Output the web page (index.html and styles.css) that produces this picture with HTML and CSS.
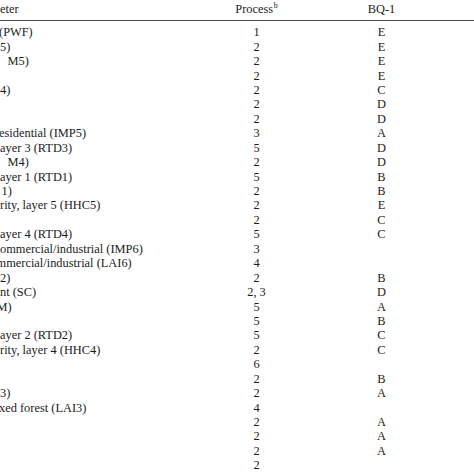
FILE: index.html
```html
<!DOCTYPE html>
<html>
<head>
<meta charset="utf-8">
<link rel="stylesheet" href="styles.css">
</head>
<body>
<div class="table">
  <div class="row head">
    <div class="c1">eter</div>
    <div class="c2">Process<sup>b</sup></div>
    <div class="c3">BQ-1</div>
  </div>
  <div class="body">
    <div class="row"><div class="c1 cut1">(PWF)</div><div class="c2">1</div><div class="c3">E</div></div>
    <div class="row"><div class="c1">5)</div><div class="c2">2</div><div class="c3">E</div></div>
    <div class="row"><div class="c1 ind">M5)</div><div class="c2">2</div><div class="c3">E</div></div>
    <div class="row"><div class="c1"></div><div class="c2">2</div><div class="c3">E</div></div>
    <div class="row"><div class="c1">4)</div><div class="c2">2</div><div class="c3">C</div></div>
    <div class="row"><div class="c1"></div><div class="c2">2</div><div class="c3">D</div></div>
    <div class="row"><div class="c1"></div><div class="c2">2</div><div class="c3">D</div></div>
    <div class="row"><div class="c1 cut1">esidential (IMP5)</div><div class="c2">3</div><div class="c3">A</div></div>
    <div class="row"><div class="c1">ayer 3 (RTD3)</div><div class="c2">5</div><div class="c3">D</div></div>
    <div class="row"><div class="c1 ind">M4)</div><div class="c2">2</div><div class="c3">D</div></div>
    <div class="row"><div class="c1">ayer 1 (RTD1)</div><div class="c2">5</div><div class="c3">B</div></div>
    <div class="row"><div class="c1 ind-s">1)</div><div class="c2">2</div><div class="c3">B</div></div>
    <div class="row"><div class="c1">rity, layer 5 (HHC5)</div><div class="c2">2</div><div class="c3">E</div></div>
    <div class="row"><div class="c1"></div><div class="c2">2</div><div class="c3">C</div></div>
    <div class="row"><div class="c1">ayer 4 (RTD4)</div><div class="c2">5</div><div class="c3">C</div></div>
    <div class="row"><div class="c1">ommercial/industrial (IMP6)</div><div class="c2">3</div><div class="c3"></div></div>
    <div class="row"><div class="c1 cut3">mmercial/industrial (LAI6)</div><div class="c2">4</div><div class="c3"></div></div>
    <div class="row"><div class="c1">2)</div><div class="c2">2</div><div class="c3">B</div></div>
    <div class="row"><div class="c1">nt (SC)</div><div class="c2">2, 3</div><div class="c3">D</div></div>
    <div class="row"><div class="c1 cut3">M)</div><div class="c2">5</div><div class="c3">A</div></div>
    <div class="row"><div class="c1"></div><div class="c2">5</div><div class="c3">B</div></div>
    <div class="row"><div class="c1">ayer 2 (RTD2)</div><div class="c2">5</div><div class="c3">C</div></div>
    <div class="row"><div class="c1">rity, layer 4 (HHC4)</div><div class="c2">2</div><div class="c3">C</div></div>
    <div class="row"><div class="c1"></div><div class="c2">6</div><div class="c3"></div></div>
    <div class="row"><div class="c1"></div><div class="c2">2</div><div class="c3">B</div></div>
    <div class="row"><div class="c1">3)</div><div class="c2">2</div><div class="c3">A</div></div>
    <div class="row"><div class="c1 cut1">xed forest (LAI3)</div><div class="c2">4</div><div class="c3"></div></div>
    <div class="row"><div class="c1"></div><div class="c2">2</div><div class="c3">A</div></div>
    <div class="row"><div class="c1"></div><div class="c2">2</div><div class="c3">A</div></div>
    <div class="row"><div class="c1"></div><div class="c2">2</div><div class="c3">A</div></div>
    <div class="row"><div class="c1"></div><div class="c2">2</div><div class="c3"></div></div>
  </div>
</div>
</body>
</html>
```
FILE: styles.css
```css
html, body {
  margin: 0;
  padding: 0;
  background: #ffffff;
  overflow: hidden;
}

.table {
  width: 474px;
  font-family: "Liberation Serif", "Times New Roman", serif;
  font-size: 12.4px;
  color: #1c1c1c;
}

.row {
  display: grid;
  grid-template-columns: 216px 81px 169px 8px;
  height: 14.45px;
  line-height: 14.45px;
  white-space: nowrap;
}

.head {
  padding-top: 2px;
  padding-bottom: 3.5px;
  border-bottom: 1.6px solid #4a4a4a;
}

.body {
  padding-top: 4.3px;
}

.c1 {
  text-align: left;
}

.c2, .c3 {
  text-align: center;
}

.head sup {
  font-size: 8px;
  line-height: 0;
  vertical-align: 5px;
  margin-left: 0.5px;
}

.ind {
  padding-left: 7.5px;
}

.ind-s {
  padding-left: 1.5px;
}

.cut1 {
  text-indent: -1px;
}

.cut3 {
  text-indent: -3.5px;
}
```
